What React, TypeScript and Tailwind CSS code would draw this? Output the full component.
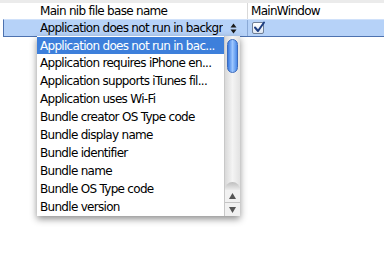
import React from 'react'

const items = [
  'Application does not run in bac...',
  'Application requires iPhone en...',
  'Application supports iTunes fil...',
  'Application uses Wi-Fi',
  'Bundle creator OS Type code',
  'Bundle display name',
  'Bundle identifier',
  'Bundle name',
  'Bundle OS Type code',
  'Bundle version',
]

function PopupArrows() {
  return (
    <svg width="7" height="11" viewBox="0 0 7 11" className="shrink-0">
      <path d="M3.5 0.5 L6.5 4.5 L0.5 4.5 Z" fill="#1a1a1a" />
      <path d="M3.5 10.5 L6.5 6.5 L0.5 6.5 Z" fill="#1a1a1a" />
    </svg>
  )
}

function Checkbox() {
  return (
    <div className="relative w-[12px] h-[12px] rounded-[2px] border border-[#6f7f97] bg-gradient-to-b from-white to-[#dfe7f2]">
      <svg width="13" height="13" viewBox="0 0 13 13" className="absolute -top-[2px] left-[0px]">
        <path d="M2 6.5 L5 10 L11 1.5" stroke="#1d3e82" strokeWidth="2" fill="none" strokeLinecap="round" strokeLinejoin="round" />
      </svg>
    </div>
  )
}

function Scrollbar() {
  return (
    <div className="w-[16px] flex flex-col border-l border-[#c8c8c8] bg-gradient-to-r from-[#d9d9d9] via-[#f4f4f4] to-[#e2e2e2]">
      <div className="flex-1 relative">
        <div className="absolute left-[2px] top-[3px] w-[11px] h-[34px] rounded-full border border-[#3c6bbd] bg-gradient-to-r from-[#3b7be0] via-[#9cc6ff] to-[#4a8ae8]" />
        <div className="absolute left-0 right-0 bottom-0 h-[8px] rounded-t-full bg-gradient-to-b from-[#bdbdbd] to-[#ececec]" />
      </div>
      <div className="h-[13px] flex items-center justify-center border-b border-[#c4c4c4] bg-[#f1f1f1]">
        <svg width="7" height="6" viewBox="0 0 7 6"><path d="M3.5 0 L7 6 L0 6 Z" fill="#555" /></svg>
      </div>
      <div className="h-[13px] flex items-center justify-center bg-[#f1f1f1]">
        <svg width="7" height="6" viewBox="0 0 7 6"><path d="M0 0 L7 0 L3.5 6 Z" fill="#555" /></svg>
      </div>
    </div>
  )
}

export default function App() {
  return (
    <div className="relative w-[384px] h-[254px] bg-white overflow-hidden font-['DejaVu_Sans',sans-serif] text-[12px] tracking-[-0.7px] whitespace-nowrap text-black">
      <div className="h-[3px] bg-[#ebebeb]" />
      {/* Row: Main nib file base name */}
      <div className="flex h-[16px] items-center">
        <div className="w-[248px] pl-[40px] border-r border-[#d9d9d9] h-full flex items-center">Main nib file base name</div>
        <div className="pl-[3px]">MainWindow</div>
      </div>
      {/* Selected row */}
      <div className="flex h-[18px] ml-[3px] bg-[#b6d2f8] border-l border-b border-[#4d72b0] border-t border-t-[#d0e1fa]">
        <div className="w-[244px] pl-[36px] pr-[10px] flex items-center justify-between border-r border-[#8aa9d6]">
          <span className="overflow-hidden">Application does not run in backgr</span>
          <PopupArrows />
        </div>
        <div className="pl-[4px] flex items-center">
          <Checkbox />
        </div>
      </div>

      {/* Popup menu */}
      <div className="absolute left-[37px] top-[36px] w-[203px] h-[180px] flex bg-white shadow-[0_3px_7px_rgba(0,0,0,0.45)]">
        <div className="flex-1 min-w-0 flex flex-col pt-[1px]">
          {items.map((t, i) => (
            <div
              key={t}
              className={
                i === 0
                  ? 'h-[17px] flex items-center pl-[3px] bg-[#3d7fdb] text-white overflow-hidden'
                  : 'h-[18px] flex items-center pl-[3px] overflow-hidden'
              }
            >
              {t}
            </div>
          ))}
        </div>
        <Scrollbar />
      </div>
    </div>
  )
}
